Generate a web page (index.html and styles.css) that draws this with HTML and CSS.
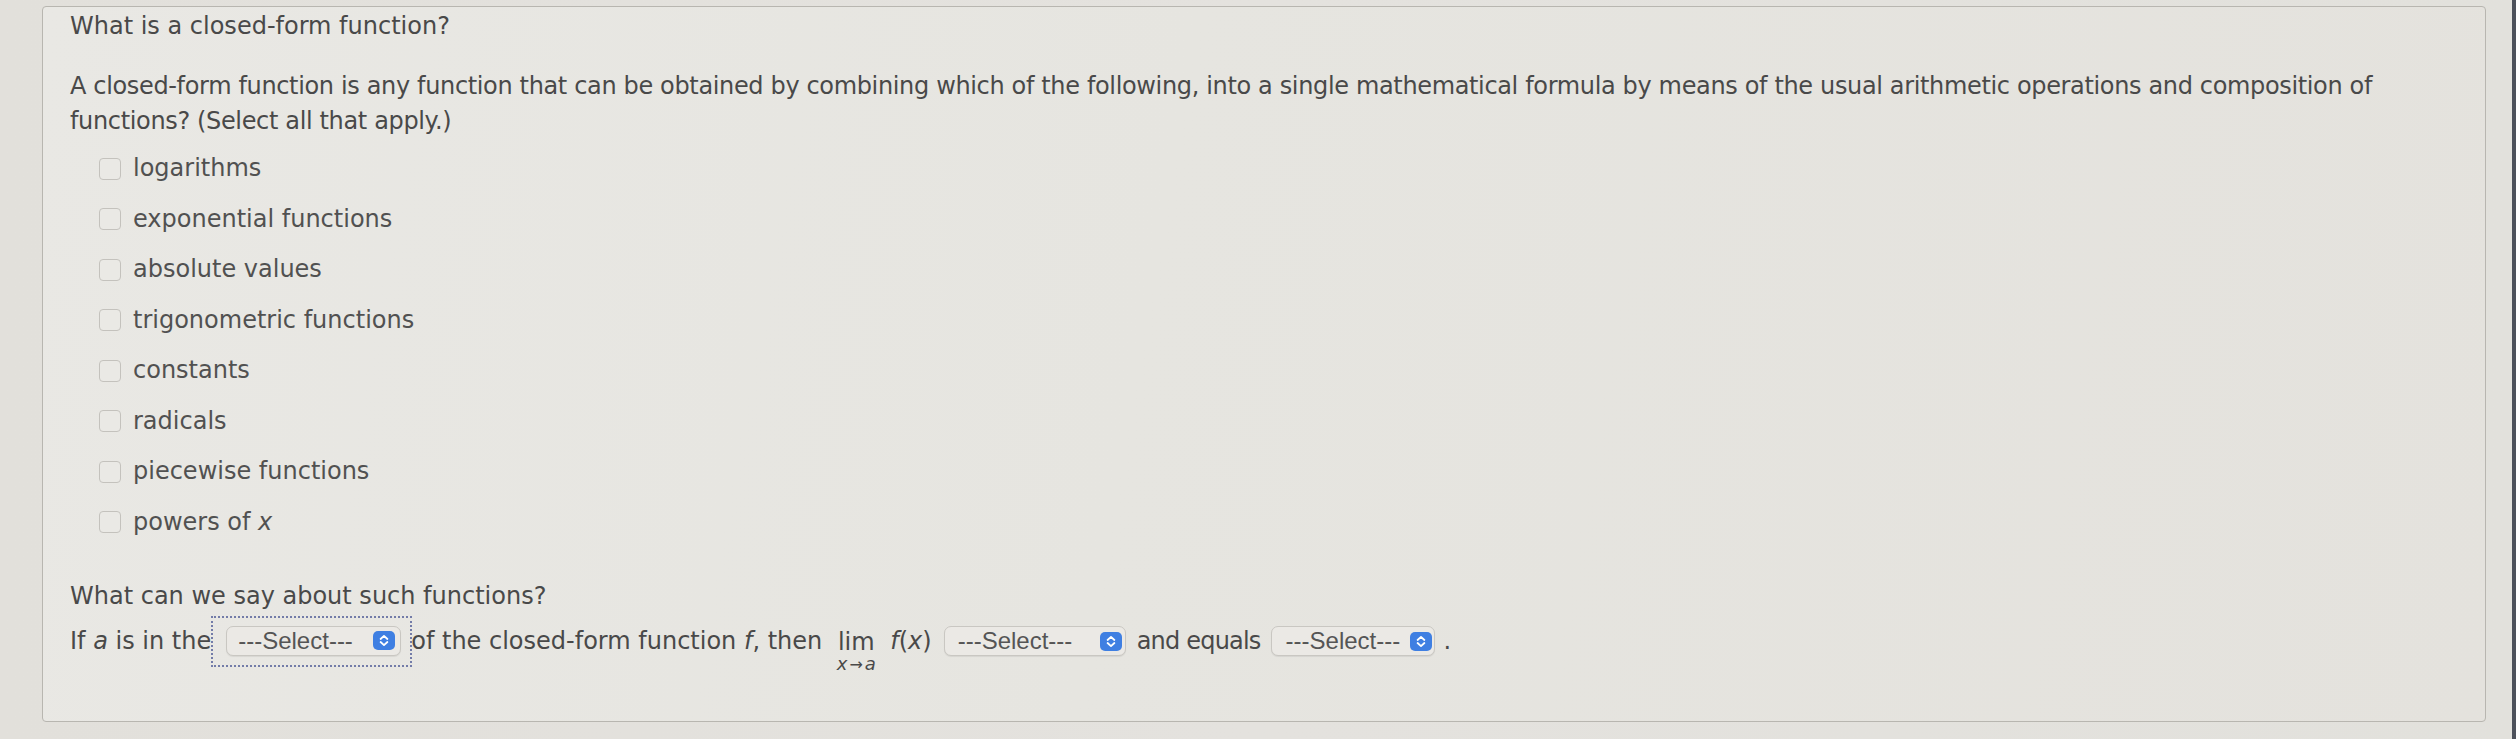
FILE: index.html
```html
<!DOCTYPE html>
<html lang="en">
<head>
<meta charset="utf-8">
<title>Closed-form function</title>
<link rel="stylesheet" href="styles.css">
</head>
<body>
<div class="screen">
  <div class="stage">
    <div class="panel">
      <p class="txt title">What is a closed-form function?</p>
      <p class="txt para">A closed-form function is any function that can be obtained by combining which of the following, into a single mathematical formula by means of the usual arithmetic operations and composition of<br>functions? (Select all that apply.)</p>
      <ul class="opts">
        <li class="opt"><span class="cb"></span><span class="lbl">logarithms</span></li>
        <li class="opt"><span class="cb"></span><span class="lbl">exponential functions</span></li>
        <li class="opt"><span class="cb"></span><span class="lbl">absolute values</span></li>
        <li class="opt"><span class="cb"></span><span class="lbl">trigonometric functions</span></li>
        <li class="opt"><span class="cb"></span><span class="lbl">constants</span></li>
        <li class="opt"><span class="cb"></span><span class="lbl">radicals</span></li>
        <li class="opt"><span class="cb"></span><span class="lbl">piecewise functions</span></li>
        <li class="opt"><span class="cb"></span><span class="lbl">powers of <i>x</i></span></li>
      </ul>
      <p class="txt ask">What can we say about such functions?</p>
      <div class="line">
        <span class="txt">If <i>a</i> is in the</span>
        <span class="focus">
          <span class="sel s1"><span>---Select---</span><svg class="step" viewBox="0 0 22 19" width="22" height="19"><rect width="22" height="19" rx="5" fill="#3f7fe2"/><path d="M7.6 8 L11 4.9 L14.4 8 M7.6 11 L11 14.1 L14.4 11" fill="none" stroke="#fff" stroke-width="1.8" stroke-linecap="round" stroke-linejoin="round"/></svg></span>
        </span>
        <span class="txt after-focus">of the closed-form function <i>f</i>, then</span>
        <span class="lim"><span class="lim-top">lim</span><span class="lim-sub"><i>x</i><span class="arr">→</span><i>a</i></span></span>
        <span class="txt fx"><i>f</i>(<i>x</i>)</span>
        <span class="sel s2"><span>---Select---</span><svg class="step" viewBox="0 0 22 19" width="22" height="19"><rect width="22" height="19" rx="5" fill="#3f7fe2"/><path d="M7.6 8 L11 4.9 L14.4 8 M7.6 11 L11 14.1 L14.4 11" fill="none" stroke="#fff" stroke-width="1.8" stroke-linecap="round" stroke-linejoin="round"/></svg></span>
        <span class="txt eq">and equals</span>
        <span class="sel s3"><span>---Select---</span><svg class="step" viewBox="0 0 22 19" width="22" height="19"><rect width="22" height="19" rx="5" fill="#3f7fe2"/><path d="M7.6 8 L11 4.9 L14.4 8 M7.6 11 L11 14.1 L14.4 11" fill="none" stroke="#fff" stroke-width="1.8" stroke-linecap="round" stroke-linejoin="round"/></svg></span>
        <span class="txt dot">.</span>
      </div>
    </div>
  </div>
  <div class="edge"></div>
</div>
</body>
</html>
```

FILE: styles.css
```css
html, body {
  margin: 0;
  padding: 0;
}

body {
  width: 2516px;
  height: 739px;
  overflow: hidden;
  background: #e0ded9;
  font-family: "DejaVu Sans", Verdana, sans-serif;
  color: #494949;
}

.screen {
  display: flex;
  height: 739px;
  background: linear-gradient(90deg, #e2e0db 0%, #e4e2de 50%, #e2e1dc 100%);
}

.stage {
  flex: 1;
  padding: 6px 0 0 42px;
}

.panel {
  box-sizing: border-box;
  width: 2444px;
  height: 716px;
  border: 1.5px solid #b8b6b0;
  border-radius: 4px;
  padding: 0 0 0 27px;
  background: linear-gradient(100deg, #e9e8e4 0%, #e6e5e0 45%, #e4e2dd 100%);
}

.txt {
  margin: 0;
  font-size: 24px;
  line-height: 35px;
  white-space: nowrap;
}

.title {
  margin-top: 2px;
}

.para {
  margin-top: 25px;
  letter-spacing: -0.35px;
}

.opts {
  list-style: none;
  margin: 12px 0 0 0;
  padding: 0;
  display: flex;
  flex-direction: column;
  gap: 15.5px;
}

.opt {
  display: flex;
  align-items: center;
  height: 35px;
  font-size: 24px;
  line-height: 35px;
  color: #515151;
}

.cb {
  box-sizing: border-box;
  width: 22px;
  height: 22px;
  margin-left: 29px;
  margin-right: 12px;
  border: 1.5px solid #c4c2bd;
  border-radius: 4px;
  background: #eae9e5;
}

.ask {
  margin-top: 39.5px;
}

.line {
  display: flex;
  align-items: center;
  margin-top: -6.5px;
  height: 67px;
}

.focus {
  display: flex;
  border: 2px dotted #737ca8;
  padding: 8px 9px 9px 13px;
}

.after-focus {
  margin-left: -1px;
}

.sel {
  box-sizing: border-box;
  display: flex;
  align-items: center;
  justify-content: space-between;
  height: 30px;
  padding: 0 3px 0 12px;
  border: 1px solid #c9c7c2;
  border-radius: 7px;
  background: #ebe9e5;
  box-shadow: 0 1px 1px rgba(0, 0, 0, 0.07);
  font-family: "Liberation Sans", Arial, sans-serif;
  font-size: 24px;
  color: #555555;
  white-space: nowrap;
}

.s1 { width: 175px; padding-right: 5px; padding-left: 11px; }
.s2 { width: 182px; margin-left: 12px; padding-left: 13px; }
.s3 { width: 164px; margin-left: 10px; padding-left: 14px; padding-right: 2px; }

.step {
  display: block;
  flex: none;
}

.lim {
  display: flex;
  flex-direction: column;
  align-items: center;
  width: 50px;
  margin-left: 9px;
  padding-top: 16px;
}

.lim-top {
  font-size: 24px;
  line-height: 35px;
}

.lim-sub {
  font-size: 18px;
  line-height: 18px;
  margin-top: -5px;
  white-space: nowrap;
}

.arr {
  margin: 0 2px;
  font-size: 16px;
}

.fx {
  margin-left: 9px;
}

.eq {
  margin-left: 11px;
  letter-spacing: -0.8px;
}

.dot {
  margin-left: 9px;
}

.edge {
  width: 4px;
  height: 739px;
  background: #4d515b;
}
```
